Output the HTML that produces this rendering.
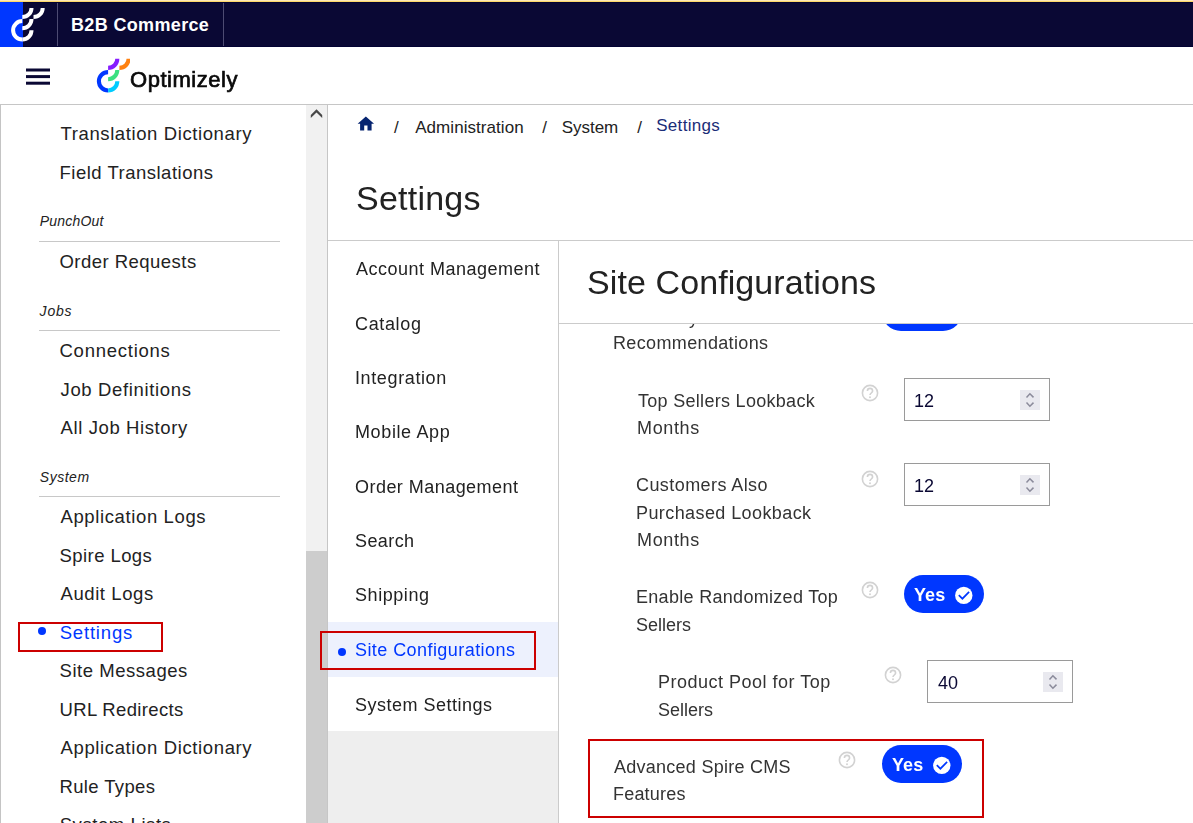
<!DOCTYPE html><html><head><meta charset="utf-8"><style>
*{margin:0;padding:0;box-sizing:border-box}
html,body{width:1193px;height:823px;overflow:hidden;background:#fff}
body{position:relative;font-family:"Liberation Sans",sans-serif}
.abs{position:absolute;display:block}
.r{position:absolute;display:block}
.t{position:absolute;line-height:1;white-space:nowrap}
.g{will-change:transform}
.inp{position:absolute;width:146px;height:43px;border:1px solid #9a9a9a;background:#fff}
.pill{position:absolute;width:80px;height:38px;border-radius:19px;background:#0037ff}
.red{position:absolute;border:2px solid #cc0000}
</style></head><body><div class="r" style="left:0;top:0;width:1193px;height:1px;background:#fde8b6"></div><div class="r" style="left:0;top:1px;width:1193px;height:1px;background:#fdd86a"></div><div class="r" style="left:0;top:2px;width:1193px;height:45px;background:#0a0834"></div><div class="r" style="left:0;top:2px;width:1193px;height:1px;background:#030233"></div><div class="r" style="left:0;top:46px;width:1193px;height:1px;background:#030233"></div><div class="r" style="left:0;top:2px;width:23px;height:45px;background:#0037ff"></div><div class="r" style="left:57px;top:3px;width:1px;height:43px;background:#4d4b72"></div><div class="r" style="left:223px;top:3px;width:1px;height:43px;background:#4d4b72"></div><svg class="abs" style="left:0;top:0" width="60" height="47"><g fill="none" stroke-width="4.0"><path d="M22.3,21.1 A9.2,9.2 0 0 0 22.3,39.5" stroke="#fff"/><path d="M22.3,39.5 A9.2,9.2 0 0 0 31.5,30.3" stroke="#fff"/><path d="M22.3,28.3 A9.2,9.2 0 0 0 31.5,19.1" stroke="#fff"/><path d="M22.3,17.1 A9.2,9.2 0 0 0 31.5,7.900000000000002" stroke="#fff"/><path d="M33.5,17.1 A9.2,9.2 0 0 0 42.7,7.900000000000002" stroke="#fff"/></g></svg><div class="r" style="left:0;top:104px;width:1193px;height:1px;background:#c6c6c6"></div><svg class="abs" style="left:20px;top:60px" width="36" height="30"><rect x="6" y="8.5" width="24" height="3" fill="#0a0834"/><rect x="6" y="15.1" width="24" height="3" fill="#0a0834"/><rect x="6" y="21.7" width="24" height="3" fill="#0a0834"/></svg><svg class="abs" style="left:80px;top:50px" width="50" height="50"><g fill="none" stroke-width="4.1"><path d="M28.1,22.1 A9.2,9.2 0 0 0 28.1,40.5" stroke="#0037ff"/><path d="M28.1,40.5 A9.2,9.2 0 0 0 37.3,31.3" stroke="#00ccff"/><path d="M28.1,29.2 A9.2,9.2 0 0 0 37.3,20.0" stroke="#3be081"/><path d="M28.1,17.9 A9.2,9.2 0 0 0 37.3,8.7" stroke="#861dff"/><path d="M39.400000000000006,17.9 A9.2,9.2 0 0 0 48.60000000000001,8.7" stroke="#ff8110"/></g></svg><div class="r" style="left:0;top:105px;width:1px;height:718px;background:#c4c4c4"></div><div class="r" style="left:39px;top:241px;width:241px;height:1px;background:#c8c8c8"></div><div class="r" style="left:39px;top:330px;width:241px;height:1px;background:#c8c8c8"></div><div class="r" style="left:39px;top:496px;width:241px;height:1px;background:#c8c8c8"></div><div class="r" style="left:306px;top:105px;width:21px;height:718px;background:#f1f1f1"></div><div class="r" style="left:306px;top:551px;width:21px;height:272px;background:#cdcdcd"></div><div class="r" style="left:327px;top:105px;width:1px;height:718px;background:#c6c6c6"></div><svg class="abs" style="left:306px;top:105px" width="21" height="20"><polygon points="10.5,4.2 16.2,9.9 16.2,13.1 10.5,7.5 4.8,13.1 4.8,9.9" fill="#484848"/></svg><div class="r" style="left:328px;top:240px;width:865px;height:1px;background:#cbcbcb"></div><div class="r" style="left:328px;top:622px;width:230px;height:55px;background:#edf1fd"></div><div class="r" style="left:328px;top:731px;width:230px;height:92px;background:#eeeeee"></div><div class="r" style="left:558px;top:241px;width:1px;height:582px;background:#cbcbcb"></div><svg class="abs" style="left:355.7px;top:114.4px" width="19.7" height="19.7" viewBox="0 0 24 24"><path d="M10 20v-6h4v6h5v-8h3L12 3 2 12h3v8z" fill="#062470"/></svg><div class="r" style="left:38px;top:627px;width:8px;height:8px;border-radius:50%;background:#0037ff"></div><div class="r" style="left:338.2px;top:647.9px;width:8px;height:8px;border-radius:50%;background:#0037ff"></div><div class="r" style="left:559px;top:324px;width:634px;height:499px;overflow:hidden"><div style="position:absolute;left:-559px;top:-324px;width:1193px;height:823px"><div class="pill" style="left:882px;top:293px"></div><div class="t g" style="left:688.5px;top:309px;font-size:18px;color:#333">y</div></div></div><div class="r" style="left:559px;top:323px;width:634px;height:1px;background:#cbcbcb"></div><svg class="abs" style="left:860.30px;top:383.30px" width="20" height="20" fill="none" stroke="#d2d2d2" stroke-width="1.6"><circle cx="10" cy="10" r="7.6"/><path d="M7.4,8.0 A2.6,2.6 0 0 1 12.6,8.0 C12.6,9.8 10,10.2 10,12.1"/><circle cx="10" cy="14.3" r="0.95" fill="#d2d2d2" stroke="none"/></svg><div class="inp" style="left:904px;top:378px"></div><svg class="abs" style="left:1020px;top:390px" width="20" height="20"><rect width="20" height="20" fill="#e9e9ef"/><polyline points="6.5,7.4 9.9,3.8 13.5,7.4" fill="none" stroke="#8b8b9b" stroke-width="1.5"/><polyline points="6.5,12.6 9.9,16.2 13.5,12.6" fill="none" stroke="#8b8b9b" stroke-width="1.5"/></svg><svg class="abs" style="left:860.40px;top:468.50px" width="20" height="20" fill="none" stroke="#d2d2d2" stroke-width="1.6"><circle cx="10" cy="10" r="7.6"/><path d="M7.4,8.0 A2.6,2.6 0 0 1 12.6,8.0 C12.6,9.8 10,10.2 10,12.1"/><circle cx="10" cy="14.3" r="0.95" fill="#d2d2d2" stroke="none"/></svg><div class="inp" style="left:904px;top:463px"></div><svg class="abs" style="left:1020px;top:475px" width="20" height="20"><rect width="20" height="20" fill="#e9e9ef"/><polyline points="6.5,7.4 9.9,3.8 13.5,7.4" fill="none" stroke="#8b8b9b" stroke-width="1.5"/><polyline points="6.5,12.6 9.9,16.2 13.5,12.6" fill="none" stroke="#8b8b9b" stroke-width="1.5"/></svg><svg class="abs" style="left:860.20px;top:580.20px" width="20" height="20" fill="none" stroke="#d2d2d2" stroke-width="1.6"><circle cx="10" cy="10" r="7.6"/><path d="M7.4,8.0 A2.6,2.6 0 0 1 12.6,8.0 C12.6,9.8 10,10.2 10,12.1"/><circle cx="10" cy="14.3" r="0.95" fill="#d2d2d2" stroke="none"/></svg><div class="pill" style="left:904px;top:575px"></div><svg class="abs" style="left:904px;top:575px" width="80" height="38"><circle cx="59.8" cy="20.4" r="8.7" fill="#fff"/><polyline points="54.8,20.2 58.4,23.7 65.1,16.9" fill="none" stroke="#0037ff" stroke-width="1.7"/></svg><svg class="abs" style="left:883.20px;top:665.40px" width="20" height="20" fill="none" stroke="#d2d2d2" stroke-width="1.6"><circle cx="10" cy="10" r="7.6"/><path d="M7.4,8.0 A2.6,2.6 0 0 1 12.6,8.0 C12.6,9.8 10,10.2 10,12.1"/><circle cx="10" cy="14.3" r="0.95" fill="#d2d2d2" stroke="none"/></svg><div class="inp" style="left:927px;top:660px"></div><svg class="abs" style="left:1043px;top:672px" width="20" height="20"><rect width="20" height="20" fill="#e9e9ef"/><polyline points="6.5,7.4 9.9,3.8 13.5,7.4" fill="none" stroke="#8b8b9b" stroke-width="1.5"/><polyline points="6.5,12.6 9.9,16.2 13.5,12.6" fill="none" stroke="#8b8b9b" stroke-width="1.5"/></svg><svg class="abs" style="left:837.40px;top:750.40px" width="20" height="20" fill="none" stroke="#d2d2d2" stroke-width="1.6"><circle cx="10" cy="10" r="7.6"/><path d="M7.4,8.0 A2.6,2.6 0 0 1 12.6,8.0 C12.6,9.8 10,10.2 10,12.1"/><circle cx="10" cy="14.3" r="0.95" fill="#d2d2d2" stroke="none"/></svg><div class="pill" style="left:882px;top:745px"></div><svg class="abs" style="left:882px;top:745px" width="80" height="38"><circle cx="59.8" cy="20.4" r="8.7" fill="#fff"/><polyline points="54.8,20.2 58.4,23.7 65.1,16.9" fill="none" stroke="#0037ff" stroke-width="1.7"/></svg><div class="t" style="left:71.0px;top:16px;font-size:18px;font-weight:bold;font-style:normal;color:#ffffff;letter-spacing:0.345px">B2B Commerce</div><div class="t g" style="-webkit-text-stroke:0.7px #0a0a0a;left:129.5px;top:69px;font-size:22px;font-weight:normal;font-style:normal;color:#0a0a0a;letter-spacing:0.533px">Optimizely</div><div class="t" style="left:60.5px;top:125px;font-size:18.5px;font-weight:normal;font-style:normal;color:#222222;letter-spacing:0.605px">Translation Dictionary</div><div class="t" style="left:59.5px;top:164px;font-size:18.5px;font-weight:normal;font-style:normal;color:#222222;letter-spacing:0.5px">Field Translations</div><div class="t" style="left:39.8px;top:214px;font-size:14px;font-weight:normal;font-style:italic;color:#222222;letter-spacing:0.186px">PunchOut</div><div class="t" style="left:59.5px;top:253px;font-size:18.5px;font-weight:normal;font-style:normal;color:#222222;letter-spacing:0.469px">Order Requests</div><div class="t" style="left:39.6px;top:304px;font-size:14px;font-weight:normal;font-style:italic;color:#222222;letter-spacing:0.8px">Jobs</div><div class="t" style="left:59.5px;top:342px;font-size:18.5px;font-weight:normal;font-style:normal;color:#222222;letter-spacing:0.75px">Connections</div><div class="t" style="left:60.5px;top:381px;font-size:18.5px;font-weight:normal;font-style:normal;color:#222222;letter-spacing:0.65px">Job Definitions</div><div class="t" style="left:60.5px;top:419px;font-size:18.5px;font-weight:normal;font-style:normal;color:#222222;letter-spacing:0.607px">All Job History</div><div class="t" style="left:39.8px;top:470px;font-size:14px;font-weight:normal;font-style:italic;color:#222222;letter-spacing:0.52px">System</div><div class="t" style="left:60.5px;top:508px;font-size:18.5px;font-weight:normal;font-style:normal;color:#222222;letter-spacing:0.62px">Application Logs</div><div class="t" style="left:59.5px;top:547px;font-size:18.5px;font-weight:normal;font-style:normal;color:#222222;letter-spacing:0.433px">Spire Logs</div><div class="t" style="left:60.5px;top:585px;font-size:18.5px;font-weight:normal;font-style:normal;color:#222222;letter-spacing:0.578px">Audit Logs</div><div class="t" style="left:59.7px;top:624px;font-size:18.5px;font-weight:normal;font-style:normal;color:#0037ff;letter-spacing:0.814px">Settings</div><div class="t" style="left:59.5px;top:662px;font-size:18.5px;font-weight:normal;font-style:normal;color:#222222;letter-spacing:0.542px">Site Messages</div><div class="t" style="left:59.5px;top:701px;font-size:18.5px;font-weight:normal;font-style:normal;color:#222222;letter-spacing:0.342px">URL Redirects</div><div class="t" style="left:60.5px;top:739px;font-size:18.5px;font-weight:normal;font-style:normal;color:#222222;letter-spacing:0.629px">Application Dictionary</div><div class="t" style="left:59.5px;top:778px;font-size:18.5px;font-weight:normal;font-style:normal;color:#222222;letter-spacing:0.356px">Rule Types</div><div class="t" style="left:59.7px;top:816px;font-size:18.5px;font-weight:normal;font-style:normal;color:#222222;letter-spacing:0.573px">System Lists</div><div class="t" style="left:394.0px;top:119px;font-size:17px;font-weight:normal;font-style:normal;color:#222222;letter-spacing:0.0px">/</div><div class="t" style="left:415.2px;top:119px;font-size:17px;font-weight:normal;font-style:normal;color:#222222;letter-spacing:0.054px">Administration</div><div class="t" style="left:542.2px;top:119px;font-size:17px;font-weight:normal;font-style:normal;color:#222222;letter-spacing:0.0px">/</div><div class="t" style="left:561.7px;top:119px;font-size:17px;font-weight:normal;font-style:normal;color:#222222;letter-spacing:-0.02px">System</div><div class="t" style="left:637.3px;top:119px;font-size:17px;font-weight:normal;font-style:normal;color:#222222;letter-spacing:0.0px">/</div><div class="t" style="left:656.2px;top:117px;font-size:17px;font-weight:normal;font-style:normal;color:#1b2d78;letter-spacing:0.314px">Settings</div><div class="t g" style="left:355.9px;top:181px;font-size:34px;font-weight:normal;font-style:normal;color:#222222;letter-spacing:0.229px">Settings</div><div class="t g" style="left:587.3px;top:265px;font-size:34px;font-weight:normal;font-style:normal;color:#222222;letter-spacing:0.094px">Site Configurations</div><div class="t g" style="left:355.9px;top:260px;font-size:18px;font-weight:normal;font-style:normal;color:#222222;letter-spacing:0.5px">Account Management</div><div class="t g" style="left:354.9px;top:315px;font-size:18px;font-weight:normal;font-style:normal;color:#222222;letter-spacing:0.65px">Catalog</div><div class="t g" style="left:354.9px;top:369px;font-size:18px;font-weight:normal;font-style:normal;color:#222222;letter-spacing:0.62px">Integration</div><div class="t g" style="left:354.9px;top:423px;font-size:18px;font-weight:normal;font-style:normal;color:#222222;letter-spacing:0.622px">Mobile App</div><div class="t g" style="left:354.9px;top:478px;font-size:18px;font-weight:normal;font-style:normal;color:#222222;letter-spacing:0.46px">Order Management</div><div class="t g" style="left:354.9px;top:532px;font-size:18px;font-weight:normal;font-style:normal;color:#222222;letter-spacing:0.42px">Search</div><div class="t g" style="left:354.9px;top:586px;font-size:18px;font-weight:normal;font-style:normal;color:#222222;letter-spacing:0.557px">Shipping</div><div class="t g" style="left:355.0px;top:641px;font-size:18px;font-weight:normal;font-style:normal;color:#0037ff;letter-spacing:0.433px">Site Configurations</div><div class="t g" style="left:354.9px;top:696px;font-size:18px;font-weight:normal;font-style:normal;color:#222222;letter-spacing:0.5px">System Settings</div><div class="t g" style="left:613.3px;top:334px;font-size:18px;font-weight:normal;font-style:normal;color:#333333;letter-spacing:0.357px">Recommendations</div><div class="t g" style="left:637.5px;top:392px;font-size:18px;font-weight:normal;font-style:normal;color:#333333;letter-spacing:0.295px">Top Sellers Lookback</div><div class="t g" style="left:636.5px;top:419px;font-size:18px;font-weight:normal;font-style:normal;color:#333333;letter-spacing:0.64px">Months</div><div class="t g" style="left:636.0px;top:476px;font-size:18px;font-weight:normal;font-style:normal;color:#333333;letter-spacing:0.423px">Customers Also</div><div class="t g" style="left:636.0px;top:504px;font-size:18px;font-weight:normal;font-style:normal;color:#333333;letter-spacing:0.412px">Purchased Lookback</div><div class="t g" style="left:636.5px;top:531px;font-size:18px;font-weight:normal;font-style:normal;color:#333333;letter-spacing:0.64px">Months</div><div class="t g" style="left:636.4px;top:588px;font-size:18px;font-weight:normal;font-style:normal;color:#333333;letter-spacing:0.3px">Enable Randomized Top</div><div class="t g" style="left:636.4px;top:616px;font-size:18px;font-weight:normal;font-style:normal;color:#333333;letter-spacing:0.0px">Sellers</div><div class="t g" style="left:658.0px;top:673px;font-size:18px;font-weight:normal;font-style:normal;color:#333333;letter-spacing:0.5px">Product Pool for Top</div><div class="t g" style="left:658.0px;top:701px;font-size:18px;font-weight:normal;font-style:normal;color:#333333;letter-spacing:0.0px">Sellers</div><div class="t g" style="left:614.2px;top:758px;font-size:18px;font-weight:normal;font-style:normal;color:#333333;letter-spacing:0.259px">Advanced Spire CMS</div><div class="t g" style="left:613.2px;top:785px;font-size:18px;font-weight:normal;font-style:normal;color:#333333;letter-spacing:0.2px">Features</div><div class="t g" style="left:914.0px;top:392px;font-size:18px;font-weight:normal;font-style:normal;color:#0a0833;letter-spacing:0.0px">12</div><div class="t g" style="left:914.0px;top:477px;font-size:18px;font-weight:normal;font-style:normal;color:#0a0833;letter-spacing:0.0px">12</div><div class="t g" style="left:937.8px;top:674px;font-size:18px;font-weight:normal;font-style:normal;color:#0a0833;letter-spacing:0.0px">40</div><div class="t g" style="left:914.1px;top:586px;font-size:18px;font-weight:bold;font-style:normal;color:#ffffff;letter-spacing:0.1px">Yes</div><div class="t g" style="left:891.7px;top:756px;font-size:18px;font-weight:bold;font-style:normal;color:#ffffff;letter-spacing:0.1px">Yes</div><div class="red" style="left:18px;top:622px;width:145px;height:30px"></div><div class="red" style="left:320px;top:631px;width:216px;height:39px"></div><div class="red" style="left:588px;top:739px;width:396px;height:79px"></div></body></html>
